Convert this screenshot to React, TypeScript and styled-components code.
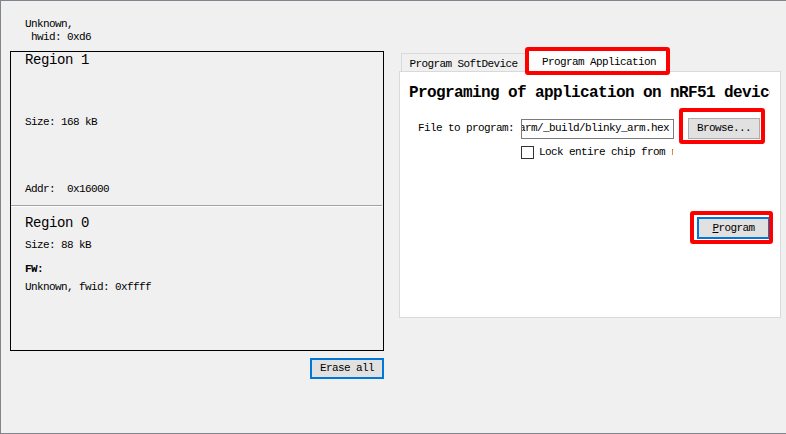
import React from 'react';
import styled, {createGlobalStyle} from 'styled-components';

const GlobalStyle = createGlobalStyle`
    html, body {
        margin: 0;
        padding: 0;
        background: #f0f0f0;
    }
    * {
        box-sizing: border-box;
    }
`;

const mono = `"Liberation Mono", "DejaVu Sans Mono", monospace`;

const Window = styled.div`
    position: relative;
    width: 786px;
    height: 434px;
    overflow: hidden;
    display: flex;
    gap: 15px;
    padding: 17px 0 0 9px;
    background: #f0f0f0;
    border-top: 1px solid #80858d;
    border-left: 1px solid #80858d;
    border-bottom: 1px solid #80858d;
    font-family: ${mono};
    font-size: 11px;
    letter-spacing: -0.6px;
    line-height: 13px;
    color: #000;
`;

const LeftColumn = styled.div`
    width: 374px;
    display: flex;
    flex-direction: column;
`;

const DeviceInfo = styled.div`
    padding-left: 15px;
    white-space: pre;
`;

const RegionBox = styled.div`
    margin-top: 7px;
    height: 300px;
    border: 1px solid #000;
    display: flex;
    flex-direction: column;
`;

const RegionSection = styled.div<{ $height?: number }>`
    display: flex;
    flex-direction: column;
    padding-left: 14px;
    ${p => p.$height ? `height: ${p.$height}px;` : 'flex: 1;'}
`;

const RegionTitle = styled.div<{ $top?: number }>`
    margin-top: ${p => p.$top ?? 0}px;
    font-size: 14px;
    letter-spacing: -0.4px;
    line-height: 16px;
`;

const InfoLine = styled.div<{ $top: number; $bold?: boolean }>`
    margin-top: ${p => p.$top}px;
    font-weight: ${p => p.$bold ? 700 : 400};
    white-space: pre;
`;

const Separator = styled.div`
    height: 2px;
    margin: 0 1px 0 0;
    border-top: 1px solid #a0a0a0;
    border-bottom: 1px solid #fff;
`;

const PushButton = styled.button<{ $width: number; $height: number }>`
    width: ${p => p.$width}px;
    height: ${p => p.$height}px;
    padding: 0;
    background: #e1e1e1;
    border: 2px solid #0078d7;
    font: inherit;
    letter-spacing: inherit;
    color: #000;
`;

const EraseButton = styled(PushButton)`
    align-self: flex-end;
    margin-top: 7px;
`;

const RightColumn = styled.div`
    width: 382px;
    padding-top: 31px;
    display: flex;
    flex-direction: column;
`;

const TabStrip = styled.div`
    display: flex;
    align-items: flex-end;
    height: 22px;
`;

const Tab = styled.div<{ $active?: boolean }>`
    position: relative;
    z-index: ${p => p.$active ? 1 : 0};
    width: ${p => p.$active ? 140 : 125}px;
    height: ${p => p.$active ? 23 : 18}px;
    margin-left: ${p => p.$active ? 1 : 2}px;
    margin-bottom: ${p => p.$active ? -1 : 0}px;
    padding-top: ${p => p.$active ? 2 : 3}px;
    padding-left: ${p => p.$active ? 4 : 0}px;
    display: flex;
    align-items: center;
    justify-content: center;
    background: ${p => p.$active ? '#fff' : '#f0f0f0'};
    border: 1px solid #d9d9d9;
    border-bottom: none;
    white-space: nowrap;
`;

const Panel = styled.div`
    height: 247px;
    display: flex;
    flex-direction: column;
    padding: 11px 10px 0 9px;
    background: #fff;
    border: 1px solid #d9d9d9;
`;

const PanelTitle = styled.div`
    width: 361px;
    overflow: hidden;
    white-space: nowrap;
    font-size: 16px;
    font-weight: 700;
    letter-spacing: -0.6px;
    line-height: 20px;
`;

const FileRow = styled.div`
    display: flex;
    align-items: center;
    height: 21px;
    margin-top: 15px;
    padding-left: 9px;
`;

const FileLabel = styled.span`
    flex-shrink: 0;
    width: 97px;
    white-space: nowrap;
`;

const PathInput = styled.div`
    flex-shrink: 0;
    width: 153px;
    height: 20px;
    margin-left: 6px;
    padding-right: 4px;
    display: flex;
    align-items: center;
    justify-content: flex-end;
    overflow: hidden;
    white-space: nowrap;
    background: #fff;
    border: 1px solid #7a7a7a;
`;

const BrowseButton = styled.button`
    flex-shrink: 0;
    width: 72px;
    height: 21px;
    margin-left: 14px;
    padding: 0;
    background: #e1e1e1;
    border: 1px solid #adadad;
    font: inherit;
    letter-spacing: inherit;
    color: #000;
`;

const CheckRow = styled.div`
    display: flex;
    align-items: center;
    margin-top: 7px;
    padding-left: 112px;
`;

const CheckBox = styled.span`
    flex-shrink: 0;
    width: 13px;
    height: 13px;
    background: #fff;
    border: 1px solid #333;
`;

const CheckLabel = styled.span`
    width: 134px;
    margin-left: 5px;
    overflow: hidden;
    white-space: nowrap;
`;

const ProgramButton = styled(PushButton)`
    align-self: flex-end;
    margin-top: 58px;
`;

const Highlight = styled.div<{ $x: number; $y: number; $w: number; $h: number }>`
    position: absolute;
    left: ${p => p.$x}px;
    top: ${p => p.$y}px;
    width: ${p => p.$w}px;
    height: ${p => p.$h}px;
    border: 4px solid #ff0000;
    border-radius: 3px;
    z-index: 5;
    pointer-events: none;
`;

const App = () => {
    return (
        <>
            <GlobalStyle/>
            <Window>
                <LeftColumn>
                    <DeviceInfo>{'Unknown,\n hwid: 0xd6'}</DeviceInfo>
                    <RegionBox>
                        {/*Region 1*/}
                        <RegionSection $height={153}>
                            <RegionTitle>Region 1</RegionTitle>
                            <InfoLine $top={48}>Size: 168 kB</InfoLine>
                            <InfoLine $top={54}>Addr:  0x16000</InfoLine>
                        </RegionSection>
                        <Separator/>
                        {/*Region 0*/}
                        <RegionSection>
                            <RegionTitle $top={8}>Region 0</RegionTitle>
                            <InfoLine $top={8}>Size: 88 kB</InfoLine>
                            <InfoLine $top={11} $bold>FW:</InfoLine>
                            <InfoLine $top={5}>Unknown, fwid: 0xffff</InfoLine>
                        </RegionSection>
                    </RegionBox>
                    <EraseButton $width={74} $height={21}>Erase all</EraseButton>
                </LeftColumn>
                <RightColumn>
                    <TabStrip>
                        <Tab>Program SoftDevice</Tab>
                        <Tab $active>Program Application</Tab>
                    </TabStrip>
                    <Panel>
                        <PanelTitle>Programing of application on nRF51 device</PanelTitle>
                        <FileRow>
                            <FileLabel>File to program:</FileLabel>
                            <PathInput>
                                <span>C:/nrf51/examples/blinky/arm/_build/blinky_arm.hex</span>
                            </PathInput>
                            <BrowseButton>Browse...</BrowseButton>
                        </FileRow>
                        <CheckRow>
                            <CheckBox/>
                            <CheckLabel>Lock entire chip from readback</CheckLabel>
                        </CheckRow>
                        <ProgramButton $width={73} $height={22}><u>P</u>rogram</ProgramButton>
                    </Panel>
                </RightColumn>
                <Highlight $x={524} $y={46} $w={145} $h={28}/>
                <Highlight $x={678} $y={107} $w={86} $h={36}/>
                <Highlight $x={689} $y={210} $w={83} $h={33}/>
            </Window>
        </>
    )
};

export default App;
